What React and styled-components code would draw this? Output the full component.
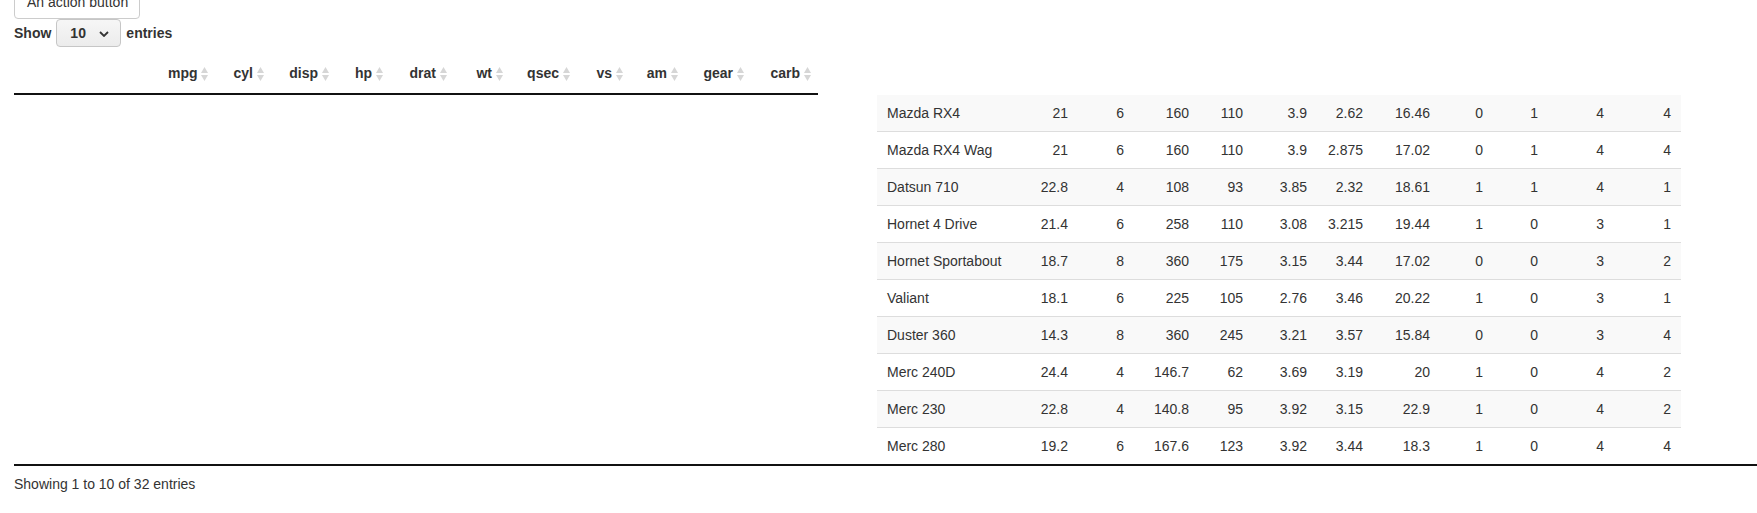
import React from 'react'
import styled, { createGlobalStyle } from 'styled-components';

const GlobalStyle = createGlobalStyle`
    body {
        margin: 0;
        font-family: "Liberation Sans", Arial, sans-serif;
        font-size: 14px;
        line-height: 20px;
        color: #333;
        background: #fff;
        overflow: hidden;
    }
`;

const Page = styled.div`
    margin-top: -15px;
    padding-left: 14px;
`;

const ActionButton = styled.button`
    display: block;
    box-sizing: border-box;
    height: 34px;
    padding: 6px 12px;
    width: 126px;
    white-space: nowrap;
    font-family: inherit;
    font-size: 14px;
    line-height: 20px;
    color: #333;
    background: #fff;
    border: 1px solid #ccc;
    border-radius: 4px;
`;

const LengthRow = styled.div`
    display: flex;
    align-items: center;
    gap: 5px;
    height: 28px;
    margin-top: 0;
    font-weight: bold;
`;

const SelectWrap = styled.div`
    position: relative;
    width: 65px;
    height: 28px;
`;

const Select = styled.select`
    appearance: none;
    width: 100%;
    height: 100%;
    padding: 0 0 0 13px;
    font-family: inherit;
    font-size: 14px;
    font-weight: bold;
    color: #333;
    background: linear-gradient(#f6f6f6, #ececec);
    border: 1px solid #c6c6c6;
    border-radius: 4px;
`;

const Chevron = styled.svg`
    position: absolute;
    right: 12px;
    top: 12px;
    pointer-events: none;
`;

const ScrollHead = styled.div`
    margin-top: 6px;
    width: 804px;
    border-bottom: 1px solid #111;
`;

const ScrollBody = styled.div`
    border-bottom: 2px solid #111;
`;

const Table = styled.table`
    table-layout: fixed;
    border-collapse: collapse;
    width: 804px;
    margin-left: ${p => p.$offset || 0}px;
`;

const HeadCell = styled.th`
    position: relative;
    padding: 10px 18px 10px 10px;
    height: 20px;
    font-weight: bold;
    text-align: right;
    white-space: nowrap;
    border-bottom: 1px solid #111;
`;

const SortIcon = styled.svg`
    position: absolute;
    right: 7px;
    top: 14px;
`;

const Row = styled.tr`
    background: ${p => p.$odd ? '#f9f9f9' : '#fff'};
`;

const Cell = styled.td`
    padding: 8px 10px;
    height: 20px;
    text-align: ${p => p.$left ? 'left' : 'right'};
    white-space: nowrap;
    border-top: ${p => p.$first ? 'none' : '1px solid #ddd'};
`;

const Info = styled.div`
    padding-top: 8px;
`;

const widths = [144, 57, 56, 65, 54, 64, 56, 67, 53, 55, 66, 67];
const columns = ['mpg', 'cyl', 'disp', 'hp', 'drat', 'wt', 'qsec', 'vs', 'am', 'gear', 'carb'];

const rows = [
    ['Mazda RX4', 21, 6, 160, 110, 3.9, 2.62, 16.46, 0, 1, 4, 4],
    ['Mazda RX4 Wag', 21, 6, 160, 110, 3.9, 2.875, 17.02, 0, 1, 4, 4],
    ['Datsun 710', 22.8, 4, 108, 93, 3.85, 2.32, 18.61, 1, 1, 4, 1],
    ['Hornet 4 Drive', 21.4, 6, 258, 110, 3.08, 3.215, 19.44, 1, 0, 3, 1],
    ['Hornet Sportabout', 18.7, 8, 360, 175, 3.15, 3.44, 17.02, 0, 0, 3, 2],
    ['Valiant', 18.1, 6, 225, 105, 2.76, 3.46, 20.22, 1, 0, 3, 1],
    ['Duster 360', 14.3, 8, 360, 245, 3.21, 3.57, 15.84, 0, 0, 3, 4],
    ['Merc 240D', 24.4, 4, 146.7, 62, 3.69, 3.19, 20, 1, 0, 4, 2],
    ['Merc 230', 22.8, 4, 140.8, 95, 3.92, 3.15, 22.9, 1, 0, 4, 2],
    ['Merc 280', 19.2, 6, 167.6, 123, 3.92, 3.44, 18.3, 1, 0, 4, 4],
];

const Cols = () => (
    <colgroup>
        {widths.map((w, i) => <col key={i} style={{ width: w }} />)}
    </colgroup>
);

const Sort = () => (
    <SortIcon width="7" height="14" viewBox="0 0 7 14">
        <path d="M3.5 0 L7 6 L0 6 Z" fill="#d6d6d6" />
        <path d="M0 8 L7 8 L3.5 14 Z" fill="#d6d6d6" />
    </SortIcon>
);

const App = () => {
    return (
        <Page>
            <GlobalStyle />
            <ActionButton>An action button</ActionButton>
            <LengthRow>
                Show
                <SelectWrap>
                    <Select defaultValue="10">
                        <option value="10">10</option>
                        <option value="25">25</option>
                        <option value="50">50</option>
                        <option value="100">100</option>
                    </Select>
                    <Chevron width="10" height="6" viewBox="0 0 10 6">
                        <path d="M1 1 L5 5 L9 1" fill="none" stroke="#333" strokeWidth="1.8" />
                    </Chevron>
                </SelectWrap>
                entries
            </LengthRow>
            <ScrollHead>
                <Table>
                    <Cols />
                    <thead>
                        <tr>
                            <HeadCell></HeadCell>
                            {columns.map(c => (
                                <HeadCell key={c}>{c}<Sort /></HeadCell>
                            ))}
                        </tr>
                    </thead>
                </Table>
            </ScrollHead>
            <ScrollBody>
                <Table $offset={863}>
                    <Cols />
                    <tbody>
                        {rows.map((r, i) => (
                            <Row key={r[0]} $odd={i % 2 === 0}>
                                {r.map((v, j) => (
                                    <Cell key={j} $left={j === 0} $first={i === 0}>{v}</Cell>
                                ))}
                            </Row>
                        ))}
                    </tbody>
                </Table>
            </ScrollBody>
            <Info>Showing 1 to 10 of 32 entries</Info>
        </Page>
    );
};

export default App
